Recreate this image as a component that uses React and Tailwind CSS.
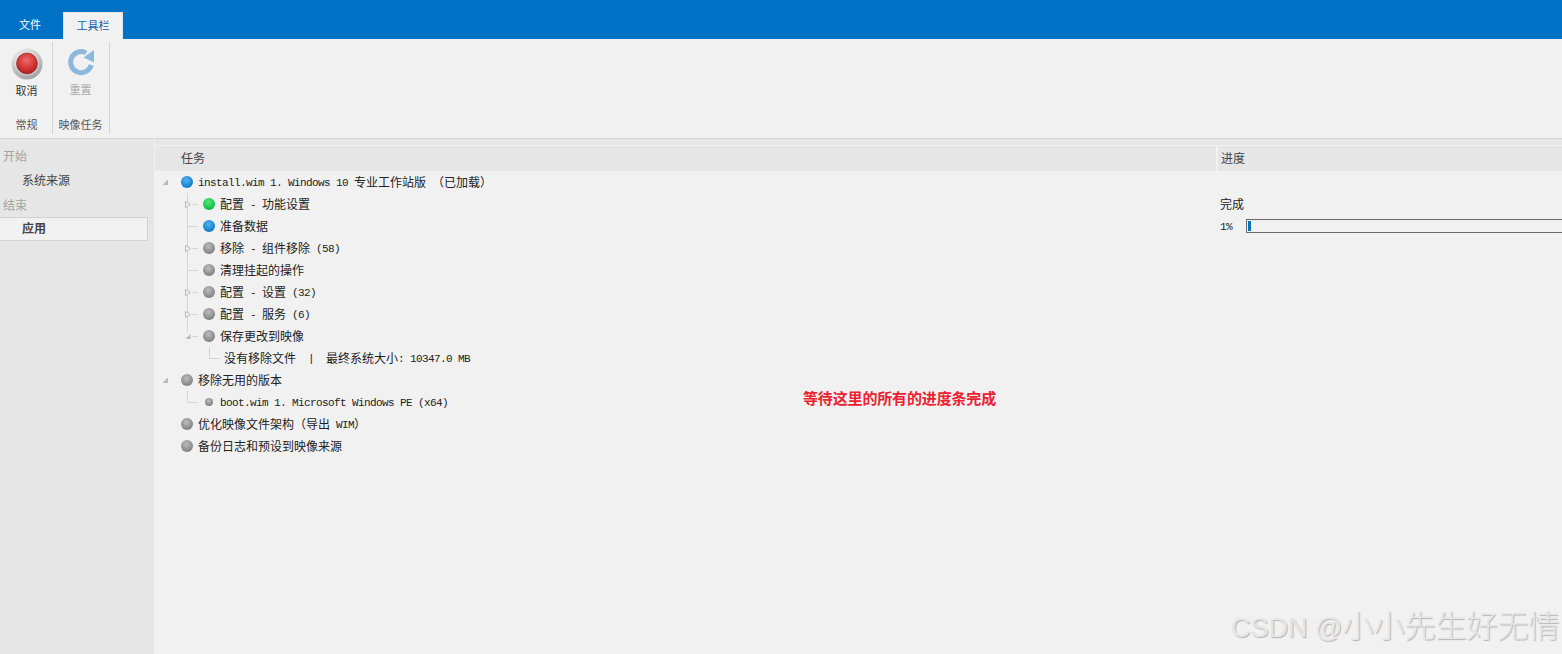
const CJK = '"Noto Sans CJK SC", sans-serif';

/* SimSun-style half width latin: 6px advance next to 12px CJK */
function Mixed({ text }) {
  const parts = text.split(/([\x20-\x7e]+)/).filter(Boolean);
  return parts.map((part, i) =>
    /^[\x20-\x7e]+$/.test(part) ? (
      <span key={i} className="font-['Liberation_Mono',monospace] text-[11px] leading-none align-[1px] tracking-[-0.6px] whitespace-pre">
        {part}
      </span>
    ) : (
      <span key={i}>{part}</span>
    )
  );
}

const ballColors = {
  blue: 'bg-[radial-gradient(circle_at_45%_35%,#55b5ee,#1586d2_60%,#0f6db0)]',
  green: 'bg-[radial-gradient(circle_at_45%_35%,#5ce67f,#16c648_60%,#0f9e36)]',
  gray: 'bg-[radial-gradient(circle_at_45%_35%,#bdbdbd,#8c8c8c_60%,#6e6e6e)]',
};

function Ball({ color = 'gray', small }) {
  return <span className={`block shrink-0 rounded-full ${small ? 'w-2 h-2' : 'w-3 h-3'} ${ballColors[color]}`} />;
}

/* guide lines of the tree, coordinates relative to the left edge of the list */
function Guide({ kind, width }) {
  const line = '#d4d4d4';
  return (
    <svg width={width} height="22" className="shrink-0 block">
      {kind === 'root' && <path d="M13 8.5V14H7.5Z" fill="#b8b8b8" />}
      {kind === 'expand' && (
        <>
          <path d="M32.5 0V22M37 11.5H43" stroke={line} fill="none" />
          <path d="M30.5 8.5L35.5 11.5L30.5 14.5Z" fill="#f1f1f1" stroke="#bcbcbc" />
        </>
      )}
      {kind === 'leaf' && <path d="M32.5 0V22M33 11.5H43" stroke={line} fill="none" />}
      {kind === 'last' && (
        <>
          <path d="M32.5 0V7M37 11.5H43" stroke={line} fill="none" />
          <path d="M35.5 9V14H30.5Z" fill="#b8b8b8" />
        </>
      )}
      {kind === 'child' && <path d="M54.5 0V11.5H65" stroke={line} fill="none" />}
      {kind === 'bootChild' && <path d="M32.5 0V11.5H43" stroke={line} fill="none" />}
    </svg>
  );
}

const rows = [
  { guide: 'root', gutter: 26, ball: 'blue', text: 'install.wim 1. Windows 10 专业工作站版 （已加载）' },
  { guide: 'expand', gutter: 48, ball: 'green', text: '配置 - 功能设置', status: 'done' },
  { guide: 'leaf', gutter: 48, ball: 'blue', text: '准备数据', status: 'progress' },
  { guide: 'expand', gutter: 48, ball: 'gray', text: '移除 - 组件移除 (58)' },
  { guide: 'leaf', gutter: 48, ball: 'gray', text: '清理挂起的操作' },
  { guide: 'expand', gutter: 48, ball: 'gray', text: '配置 - 设置 (32)' },
  { guide: 'expand', gutter: 48, ball: 'gray', text: '配置 - 服务 (6)' },
  { guide: 'last', gutter: 48, ball: 'gray', text: '保存更改到映像' },
  { guide: 'child', gutter: 69, text: '没有移除文件  |  最终系统大小: 10347.0 MB' },
  { guide: 'root', gutter: 26, ball: 'gray', text: '移除无用的版本' },
  { guide: 'bootChild', gutter: 50, ball: 'gray', small: true, text: 'boot.wim 1. Microsoft Windows PE (x64)' },
  { gutter: 26, ball: 'gray', text: '优化映像文件架构（导出 WIM）' },
  { gutter: 26, ball: 'gray', text: '备份日志和预设到映像来源' },
];

function Status({ status }) {
  if (status === 'done') return <span className="pl-[3px]">完成</span>;
  if (status === 'progress') {
    return (
      <div className="flex items-center w-[400px] shrink-0 pl-[3px]">
        <span className="w-[26px] shrink-0">
          <Mixed text="1%" />
        </span>
        <div className="flex-1 h-[14px] border border-[#6a6a6a] p-px">
          <div className="w-[3px] h-full bg-[#0072c6]" />
        </div>
      </div>
    );
  }
  return null;
}

function TreeRow({ row }) {
  return (
    <div className="flex h-[22px] items-center text-[12px] leading-[22px] text-[#222]">
      <div className="w-[1062px] shrink-0 flex items-center">
        <Guide kind={row.guide} width={row.gutter} />
        {row.ball && <Ball color={row.ball} small={row.small} />}
        <span className={`whitespace-pre ${row.small ? 'ml-[7px]' : row.ball ? 'ml-[5px]' : ''}`}>
          <Mixed text={row.text} />
        </span>
      </div>
      <div className="flex-1 min-w-0 flex items-center">
        <Status status={row.status} />
      </div>
    </div>
  );
}

function RecordIcon() {
  return (
    <svg width="32" height="32" viewBox="0 0 32 32">
      <defs>
        <linearGradient id="recRing" x1="0.2" y1="0" x2="0.7" y2="1">
          <stop offset="0%" stopColor="#ececec" />
          <stop offset="55%" stopColor="#bdbdbd" />
          <stop offset="100%" stopColor="#a2a2a2" />
        </linearGradient>
        <radialGradient id="recCore" cx="48%" cy="35%" r="65%">
          <stop offset="0%" stopColor="#ee6a6a" />
          <stop offset="55%" stopColor="#d83a3a" />
          <stop offset="100%" stopColor="#a82020" />
        </radialGradient>
      </defs>
      <circle cx="16" cy="16" r="15.5" fill="url(#recRing)" />
      <circle cx="16" cy="15.5" r="12" fill="#f2f2f2" fillOpacity="0.5" />
      <circle cx="16" cy="15.5" r="10.5" fill="url(#recCore)" stroke="#8f2626" strokeWidth="0.7" />
    </svg>
  );
}

function ResetIcon() {
  return (
    <svg width="28" height="28" viewBox="0 0 28 28">
      <path d="M24.3 16A10.5 10.5 0 1 1 19.2 3.9" fill="none" stroke="#8db8dc" strokeWidth="5" />
      <path d="M27 1V13.5L16.5 8.5Z" fill="#8db8dc" />
    </svg>
  );
}

function RibbonGroup({ label, width, children }) {
  return (
    <div className={`flex flex-col items-center h-[92px] border-r border-[#d4d4d4] ${width}`}>
      <div className="h-[75px] flex flex-col items-center">{children}</div>
      <span className="text-[11px] text-[#555] leading-[14px]">{label}</span>
    </div>
  );
}

export default function App() {
  return (
    <div
      className="relative w-[1562px] h-[654px] overflow-hidden flex flex-col bg-[#f1f1f1]"
      style={{ fontFamily: CJK }}
    >
      <div className="h-[39px] shrink-0 bg-[#0072c6] flex items-end text-[11px]">
        <div className="w-[63px] h-[27px] flex items-center justify-center text-white pr-[3px] pb-[2px]">文件</div>
        <div className="w-[60px] h-[27px] flex items-center justify-center bg-[#f1f1f1] text-[#0f5ea8] border-t border-x border-[#e4e4e4] pb-[2px]">
          工具栏
        </div>
      </div>

      <div className="h-[100px] shrink-0 flex pt-[3px] border-b border-[#d6d6d6]">
        <RibbonGroup label="常规" width="w-[53px] pl-px">
          <div className="pt-[6px]">
            <RecordIcon />
          </div>
          <span className="text-[11px] text-[#333] mt-[2px] leading-[16px]">取消</span>
        </RibbonGroup>
        <RibbonGroup label="映像任务" width="w-[57px] pl-px pr-[2px]">
          <div className="pt-[7px]">
            <ResetIcon />
          </div>
          <span className="text-[11px] text-[#aaa] mt-[4px] leading-[16px]">重置</span>
        </RibbonGroup>
      </div>

      <div className="flex flex-1 min-h-0">
        <aside className="w-[154px] shrink-0 bg-[#e6e6e6] text-[12px] pt-[7px]">
          <div className="h-[23px] leading-[19px] pl-[3px] text-[#a3a3a3]">开始</div>
          <div className="h-[24px] leading-[22px] pl-[22px] text-[#444]">系统来源</div>
          <div className="h-[24px] leading-[24px] pl-[3px] text-[#a3a3a3]">结束</div>
          <div className="w-[148px] h-[24px] leading-[19px] pl-[22px] font-bold text-[#444] bg-[#f1f1f1] border border-l-0 border-[#d2d2d2]">
            应用
          </div>
        </aside>

        <main className="flex-1 min-w-0 ml-px overflow-hidden">
          <div className="h-[6px] bg-[#e6e6e6] -ml-px" />
          <div className="h-[26px] flex text-[12px] text-[#444] leading-[23px] pt-px">
            <div className="w-[1061px] shrink-0 bg-[#e6e6e6] pl-[26px]">任务</div>
            <div className="flex-1 ml-[2px] bg-[#e6e6e6] pl-[3px]">进度</div>
          </div>
          {rows.map((row) => (
            <TreeRow key={row.text} row={row} />
          ))}
        </main>
      </div>

      <div className="absolute left-[803px] top-[388px] text-[15px] leading-[20px] tracking-[-0.15px] font-bold text-[#ee2030] whitespace-nowrap">
        等待这里的所有的进度条完成
      </div>
      <div className="absolute left-[1231px] top-[606px] text-[31px] leading-[42px] font-light text-[#e6e6e6] whitespace-nowrap [text-shadow:1px_1px_1px_#b4b4b4] font-['Liberation_Sans','Noto_Sans_CJK_SC',sans-serif]">
        <span className="text-[27px]">CSDN @</span>小小先生好无情
      </div>
    </div>
  );
}
